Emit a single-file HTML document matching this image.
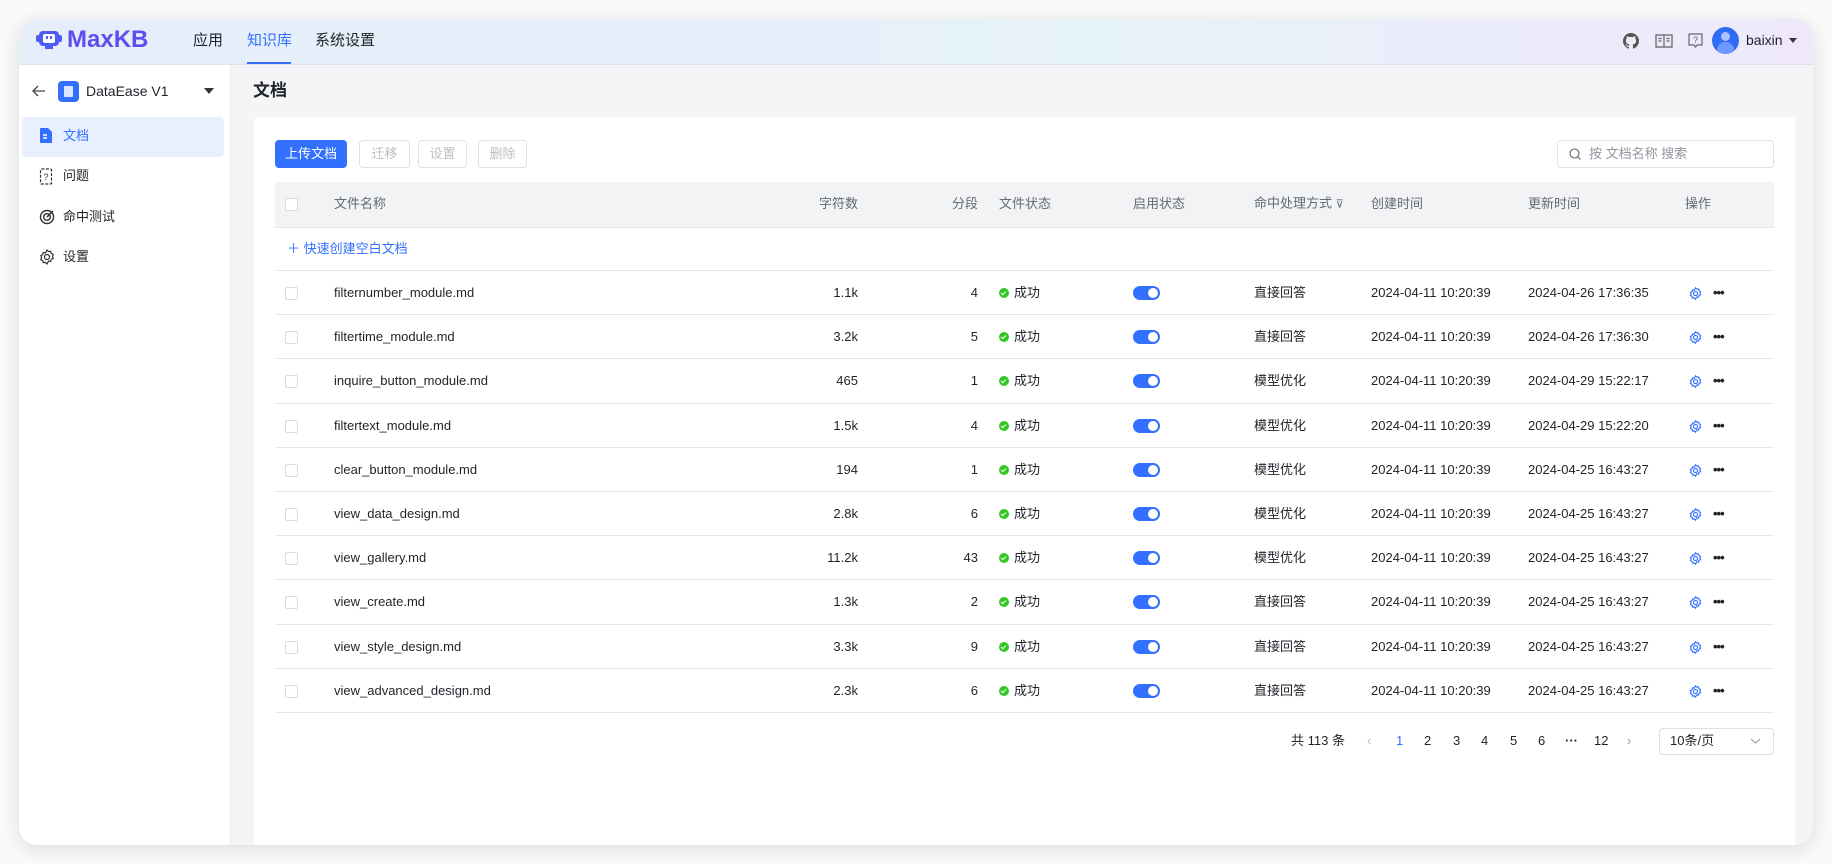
<!DOCTYPE html>
<html><head><meta charset="utf-8"><style>
*{box-sizing:border-box;margin:0;padding:0}
body{width:1832px;height:864px;background:#fafafa;font-family:"Liberation Sans","Noto Sans CJK SC",sans-serif;color:#1f2329;font-size:13px;position:relative;overflow:hidden}
.a{position:absolute;white-space:nowrap}
.win{position:absolute;left:19px;top:19px;width:1794px;height:826px;border-radius:18px;background:#f4f5f7;overflow:hidden;box-shadow:0 4px 20px rgba(0,0,0,.12)}
.hdr{position:absolute;left:0;top:0;width:100%;height:46px;background:linear-gradient(90deg,#e7eefb 0%,#e6f0fa 45%,#e7f3fa 60%,#efe8fb 100%);border-bottom:1px solid #dfe2e8}
.side{position:absolute;left:0;top:46px;width:212px;height:780px;background:#fff;border-right:1px solid #e8eaee}
.card{position:absolute;left:235px;top:98px;width:1541px;height:740px;background:#fff;border-radius:4px}
.btn{position:absolute;top:140px;height:28px;border:1px solid #dee0e3;border-radius:4px;color:#bbbfc4;font-size:13px;line-height:26px;text-align:center;background:#fff}
.ln{position:absolute;left:275px;width:1499px;height:1px;background:#e6e8eb}
.cb{width:13px;height:13px;border:1px solid #d8dbe0;border-radius:2px;background:#fff}
.r{text-align:right}
.sw{width:27px;height:14px;border-radius:7px;background:#3370ff}
.sw:after{content:"";position:absolute;right:2px;top:2px;width:10px;height:10px;border-radius:50%;background:#fff}
.ok{display:inline-block;width:10px;height:10px;border-radius:50%;background:#34c724;vertical-align:-1px;margin-right:5px;position:relative}
.ok:after{content:"";position:absolute;left:3px;top:2px;width:2px;height:4px;border:solid #fff;border-width:0 1.3px 1.3px 0;transform:rotate(45deg)}
.m{transform:translateY(-50%);line-height:18px}
.th{color:#646a73}
</style></head><body>
<div class="win">
 <div class="hdr"></div>
 <div class="side"></div>
 <div class="card"></div>
</div>
<svg class="a" style="left:36px;top:30px" width="26" height="22" viewBox="0 0 26 22"><rect x="3" y="1" width="20" height="15" rx="4" fill="#4d5cf3"/><rect x="0" y="5" width="4" height="7" rx="2" fill="#4d5cf3"/><rect x="22" y="5" width="4" height="7" rx="2" fill="#4d5cf3"/><rect x="7" y="4" width="12" height="9" rx="2" fill="#fff"/><rect x="10" y="6" width="2" height="3" fill="#4d5cf3"/><rect x="14" y="6" width="2" height="3" fill="#4d5cf3"/><rect x="9" y="16" width="8" height="3" fill="#4d5cf3"/></svg>
<div class="a" style="left:67px;top:27px;font-size:24px;font-weight:bold;color:#5a4ff0;line-height:26px">MaxKB</div>
<div class="a m" style="left:193px;top:41px;font-size:15px">应用</div>
<div class="a m" style="left:247px;top:41px;font-size:15px;color:#3370ff">知识库</div>
<div class="a" style="left:247px;top:62px;width:44px;height:2px;background:#3370ff"></div>
<div class="a m" style="left:315px;top:41px;font-size:15px">系统设置</div>
<svg class="a" style="left:1623px;top:33px" width="16" height="16" viewBox="0 0 16 16"><path fill="#555" d="M8 0C3.58 0 0 3.58 0 8c0 3.54 2.29 6.53 5.470 7.59.4.07.55-.17.55-.38v-1.33c-2.23.48-2.7-1.07-2.7-1.07-.36-.92-.89-1.170-.89-1.17-.73-.5.06-.49.06-.49.8.06 1.23.83 1.23.83.72 1.22 1.870.87 2.33.66.07-.52.28-.87.51-1.07-1.78-.2-3.64-.89-3.64-3.95 0-.87.31-1.59.82-2.150-.08-.2-.36-1.02.08-2.12 0 0 .67-.21 2.2.82A7.6 7.6 0 0 1 8 3.87c.68 0 1.36.09 2 .27 1.53-1.04 2.2-.82 2.2-.82.44 1.1.16 1.92.08 2.12.51.56.82 1.27.82 2.15 0 3.07-1.87 3.75-3.65 3.95.29.25.54.73.54 1.48v2.19c0 .21.15.46.55.38A8 8 0 0 0 16 8c0-4.42-3.58-8-8-8z"/></svg>
<svg class="a" style="left:1655px;top:34px" width="18" height="14" viewBox="0 0 18 14"><rect x="1" y="1" width="16" height="12" fill="none" stroke="#666" stroke-width="1.3"/><path d="M9 1v12M3.5 4.5h3M3.5 7h3M11.5 4.5h3M11.5 7h3" stroke="#666" stroke-width="1.2"/></svg>
<svg class="a" style="left:1688px;top:33px" width="15" height="16" viewBox="0 0 15 16"><path d="M1 1h13v11H9l-1.5 2L6 12H1z" fill="none" stroke="#666" stroke-width="1.2"/><text x="7.5" y="10" font-size="9" text-anchor="middle" fill="#666" font-family="Liberation Sans">?</text></svg>
<div class="a" style="left:1712px;top:27px;width:27px;height:27px;border-radius:50%;background:#2f6bf5;overflow:hidden"><div class="a" style="left:9px;top:5px;width:9px;height:9px;border-radius:50%;background:#a9c3ff"></div><div class="a" style="left:5px;top:15px;width:17px;height:14px;border-radius:8px 8px 0 0;background:#6f98ff"></div></div>
<div class="a m" style="left:1746px;top:40px;font-size:14px">baixin</div>
<div class="a" style="left:1789px;top:38px;border:4px solid transparent;border-top:5px solid #333"></div>

<svg class="a" style="left:32px;top:85px" width="14" height="12" viewBox="0 0 14 12"><path d="M13 6H1.5M6 1L1 6l5 5" fill="none" stroke="#444" stroke-width="1.3"/></svg>
<div class="a" style="left:58px;top:81px;width:21px;height:21px;border-radius:4px;background:#3370ff"></div>
<div class="a" style="left:64px;top:86px;width:9px;height:11px;border-radius:1px;background:#dbe6ff"></div>
<div class="a m" style="left:86px;top:91px;font-size:14px">DataEase V1</div>
<div class="a" style="left:204px;top:88px;border:5px solid transparent;border-top:6px solid #333"></div>
<div class="a" style="left:22px;top:117px;width:202px;height:40px;border-radius:4px;background:#e8efff"></div>
<svg class="a" style="left:40px;top:128px" width="12" height="15" viewBox="0 0 12 15"><path d="M1 0h7l4 4v10a1 1 0 0 1-1 1H1a1 1 0 0 1-1-1V1a1 1 0 0 1 1-1z" fill="#3370ff"/><path d="M3 7h4M3 10h4" stroke="#fff" stroke-width="1.4"/></svg>
<div class="a m" style="left:63px;top:136px;font-size:13px;color:#3370ff">文档</div>
<svg class="a" style="left:39px;top:168px" width="14" height="17" viewBox="0 0 14 17"><rect x="1.5" y="1" width="11" height="15" rx="1" fill="none" stroke="#333" stroke-width="1.2" stroke-dasharray="3 1.5"/><text x="7" y="12" font-size="9" text-anchor="middle" fill="#333" font-family="Liberation Sans">?</text></svg>
<div class="a m" style="left:63px;top:176px">问题</div>
<svg class="a" style="left:39px;top:209px" width="16" height="16" viewBox="0 0 16 16"><circle cx="8" cy="8" r="6.5" fill="none" stroke="#333" stroke-width="1.4"/><circle cx="8" cy="8" r="3.3" fill="none" stroke="#333" stroke-width="1.4"/><path d="M8 8l6-6" stroke="#333" stroke-width="1.4"/></svg>
<div class="a m" style="left:63px;top:217px">命中测试</div>
<svg class="a" style="left:39px;top:249px" width="16" height="16" viewBox="0 0 16 16"><path d="M8 1l1.5 1.6 2.2-.3.5 2.1 2 1-.8 2 .8 2-2 1-.5 2.1-2.2-.3L8 15l-1.5-1.6-2.2.3-.5-2.1-2-1 .8-2-.8-2 2-1 .5-2.1 2.2.3z" fill="none" stroke="#333" stroke-width="1.2"/><circle cx="8" cy="8" r="2.5" fill="none" stroke="#333" stroke-width="1.2"/></svg>
<div class="a m" style="left:63px;top:257px">设置</div>

<div class="a m" style="left:253px;top:91px;font-size:17px;font-weight:bold">文档</div>
<div class="btn" style="left:275px;width:72px;background:#3370ff;border-color:#3370ff;color:#fff">上传文档</div>
<div class="btn" style="left:359px;width:51px">迁移</div>
<div class="btn" style="left:418px;width:49px">设置</div>
<div class="btn" style="left:478px;width:49px">删除</div>
<div class="a" style="left:1557px;top:140px;width:217px;height:28px;border:1px solid #dee0e3;border-radius:4px"></div>
<svg class="a" style="left:1569px;top:148px" width="12" height="12" viewBox="0 0 12 12"><circle cx="5.5" cy="5.5" r="4.5" fill="none" stroke="#666" stroke-width="1.1"/><path d="M9 9l2.5 2.5" stroke="#666" stroke-width="1.1"/></svg>
<div class="a m" style="left:1589px;top:154px;color:#8f959e">按 文档名称 搜索</div>

<div class="a" style="left:275px;top:182px;width:1499px;height:45px;background:#f2f3f5"></div>
<div class="ln" style="top:227px"></div>
<div class="a cb" style="left:285px;top:198px"></div>
<div class="a m th" style="left:334px;top:204px">文件名称</div>
<div class="a m th r" style="right:974px;top:204px">字符数</div>
<div class="a m th r" style="right:854px;top:204px">分段</div>
<div class="a m th" style="left:999px;top:204px">文件状态</div>
<div class="a m th" style="left:1133px;top:204px">启用状态</div>
<div class="a m th" style="left:1254px;top:204px">命中处理方式 <span style="font-size:11px">⊽</span></div>
<div class="a m th" style="left:1371px;top:204px">创建时间</div>
<div class="a m th" style="left:1528px;top:204px">更新时间</div>
<div class="a m th" style="left:1685px;top:204px">操作</div>
<div class="a m" style="left:287px;top:249px;color:#3370ff">＋ 快速创建空白文档</div>
<div class="ln" style="top:270px"></div>
<div id="rows"></div>

<div class="a m" style="left:1291px;top:741px">共 113 条</div>
<div class="a m" style="left:1367px;top:741px;color:#bbb">‹</div>
<div class="a m" style="left:1396px;top:741px;color:#3370ff">1</div>
<div class="a m" style="left:1424px;top:741px">2</div>
<div class="a m" style="left:1453px;top:741px">3</div>
<div class="a m" style="left:1481px;top:741px">4</div>
<div class="a m" style="left:1510px;top:741px">5</div>
<div class="a m" style="left:1538px;top:741px">6</div>
<div class="a m" style="left:1565px;top:741px;font-weight:bold">···</div>
<div class="a m" style="left:1594px;top:741px">12</div>
<div class="a m" style="left:1627px;top:741px;color:#999">›</div>
<div class="a" style="left:1659px;top:728px;width:115px;height:27px;border:1px solid #dee0e3;border-radius:4px"></div>
<div class="a m" style="left:1670px;top:741px">10条/页</div>
<svg class="a" style="left:1750px;top:738px" width="11" height="6" viewBox="0 0 11 6"><path d="M1 1l4.5 4 4.5-4" fill="none" stroke="#999" stroke-width="1.1"/></svg>
<script>
var d=[["filternumber_module.md","1.1k",4,"直接回答","2024-04-26 17:36:35"],["filtertime_module.md","3.2k",5,"直接回答","2024-04-26 17:36:30"],["inquire_button_module.md","465",1,"模型优化","2024-04-29 15:22:17"],["filtertext_module.md","1.5k",4,"模型优化","2024-04-29 15:22:20"],["clear_button_module.md","194",1,"模型优化","2024-04-25 16:43:27"],["view_data_design.md","2.8k",6,"模型优化","2024-04-25 16:43:27"],["view_gallery.md","11.2k",43,"模型优化","2024-04-25 16:43:27"],["view_create.md","1.3k",2,"直接回答","2024-04-25 16:43:27"],["view_style_design.md","3.3k",9,"直接回答","2024-04-25 16:43:27"],["view_advanced_design.md","2.3k",6,"直接回答","2024-04-25 16:43:27"]];
var h="";d.forEach(function(r,i){var c=293+i*44.2,t='top:'+c+'px';h+='<div class="a cb" style="left:285px;top:'+(c-6)+'px"></div><div class="a m" style="left:334px;'+t+'">'+r[0]+'</div><div class="a m r" style="right:974px;'+t+'">'+r[1]+'</div><div class="a m r" style="right:854px;'+t+'">'+r[2]+'</div><div class="a m" style="left:999px;'+t+'"><span class="ok"></span>成功</div><div class="a sw" style="left:1133px;top:'+(c-7)+'px"></div><div class="a m" style="left:1254px;'+t+'">'+r[3]+'</div><div class="a m" style="left:1371px;'+t+'">2024-04-11 10:20:39</div><div class="a m" style="left:1528px;'+t+'">'+r[4]+'</div><svg class="a" style="left:1689px;top:'+(c-6)+'px" width="13" height="13" viewBox="0 0 16 16"><path d="M8 1l1.5 1.6 2.2-.3.5 2.1 2 1-.8 2 .8 2-2 1-.5 2.1-2.2-.3L8 15l-1.5-1.6-2.2.3-.5-2.1-2-1 .8-2-.8-2 2-1 .5-2.1 2.2.3z" fill="none" stroke="#3370ff" stroke-width="1.4"/><circle cx="8" cy="8" r="2.5" fill="none" stroke="#3370ff" stroke-width="1.4"/></svg><div class="a m" style="left:1713px;'+t+';font-weight:bold;letter-spacing:-1px">•••</div><div class="ln" style="top:'+(270+(i+1)*44.2)+'px"></div>'});
document.getElementById("rows").innerHTML=h;
</script>
</body></html>
